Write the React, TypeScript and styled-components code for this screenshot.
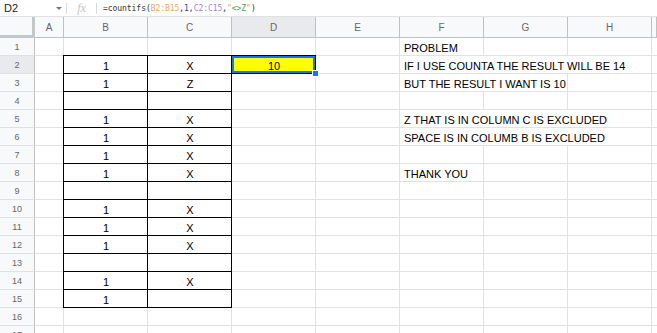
import React from "react";
import styled, { createGlobalStyle, css } from "styled-components";

const COLUMNS = ["A", "B", "C", "D", "E", "F", "G", "H", ""];
const GRID = "35px 29px repeat(7, 84px) 1fr";

type Cell = { col: string; text: string; span?: number };
type RowData = { n: number; boxed: boolean; cells: Cell[] };

const mk = (n: number, b: string, c: string, f?: string, span?: number): RowData => ({
  n,
  boxed: n >= 2 && n <= 15,
  cells: [
    { col: "B", text: b },
    { col: "C", text: c },
    ...(f ? [{ col: "F", text: f, span }] : []),
  ],
});

const rows: RowData[] = [
  mk(1, "", "", "PROBLEM"),
  mk(2, "1", "X", "IF I USE COUNTA THE RESULT WILL BE 14", 3),
  mk(3, "1", "Z", "BUT THE RESULT I WANT IS 10", 2),
  mk(4, "", ""),
  mk(5, "1", "X", "Z THAT IS IN COLUMN C IS EXCLUDED", 3),
  mk(6, "1", "X", "SPACE IS IN COLUMB B IS EXCLUDED", 3),
  mk(7, "1", "X"),
  mk(8, "1", "X", "THANK YOU"),
  mk(9, "", ""),
  mk(10, "1", "X"),
  mk(11, "1", "X"),
  mk(12, "1", "X"),
  mk(13, "", ""),
  mk(14, "1", "X"),
  mk(15, "1", ""),
  mk(16, "", ""),
  mk(17, "", ""),
];

const App = () => {
  return (
    <>
      <GlobalStyle />
      <Sheet>
        <FormulaBar>
          <NameBox>
            D2
            <Caret />
          </NameBox>
          <Divider />
          <Fx>fx</Fx>
          <Divider />
          <Formula>
            =countifs(<Tok $c="#f2a760">B2:B15</Tok>,<Tok $c="#3b3b8f">1</Tok>,
            <Tok $c="#ab82cf">C2:C15</Tok>,<Tok $c="#e6a24f">"</Tok>
            <Tok $c="#3aa55a">&lt;&gt;Z</Tok>
            <Tok $c="#e6a24f">"</Tok>)
          </Formula>
        </FormulaBar>

        <HeaderRow>
          <Corner />
          {COLUMNS.map((c, i) => (
            <ColHead key={i} $active={c === "D"}>
              {c}
            </ColHead>
          ))}
        </HeaderRow>

        {rows.map((row) => {
          const out: React.ReactNode[] = [];
          let skip = 0;
          COLUMNS.forEach((col, i) => {
            if (skip > 0) {
              skip--;
              return;
            }
            const cell = row.cells.find((c) => c.col === col);
            const boxed = row.boxed && (col === "B" || col === "C");
            const span = cell?.span ?? 1;
            skip = span - 1;
            if (row.n === 2 && col === "D") {
              out.push(
                <DataCell key={i} $boxed $fill="#ffff00" $center>
                  10
                  <Selection />
                  <Handle />
                </DataCell>
              );
              return;
            }
            out.push(
              <DataCell key={i} $boxed={boxed} $center={col === "B" || col === "C"} $span={span}>
                {cell?.text}
              </DataCell>
            );
          });
          return (
            <Row key={row.n}>
              <RowHead $active={row.n === 2}>{row.n}</RowHead>
              {out}
            </Row>
          );
        })}
      </Sheet>
    </>
  );
};

export default App;

const GlobalStyle = createGlobalStyle`
  html, body {
    margin: 0;
    padding: 0;
    background: #ffffff;
    overflow: hidden;
  }
  body {
    font-family: "Liberation Sans", Arial, sans-serif;
  }
`;

const Sheet = styled.div`
  width: 657px;
  height: 333px;
  overflow: hidden;
  background: #fff;
`;

const FormulaBar = styled.div`
  display: flex;
  align-items: center;
  height: 16px;
  border-bottom: 1px solid #e1e1e1;
  font-size: 11px;
  color: #222;
`;

const NameBox = styled.div`
  display: flex;
  align-items: center;
  justify-content: space-between;
  width: 58px;
  padding: 0 4px 0 4px;
  font-size: 11px;
  color: #202124;
`;

const Caret = styled.span`
  width: 0;
  height: 0;
  border-left: 3px solid transparent;
  border-right: 3px solid transparent;
  border-top: 3px solid #777;
  margin-top: 1px;
`;

const Divider = styled.div`
  width: 1px;
  height: 11px;
  background: #dadce0;
`;

const Fx = styled.div`
  width: 29px;
  text-align: center;
  font-family: "Liberation Serif", serif;
  font-style: italic;
  font-size: 12px;
  color: #c4c4c4;
`;

const Formula = styled.div`
  padding-left: 6px;
  font-family: "DejaVu Sans Mono", "Liberation Mono", monospace;
  font-size: 8px;
  letter-spacing: -0.05px;
  color: #333;
  white-space: nowrap;
`;

const Tok = styled.span<{ $c: string }>`
  color: ${(p) => p.$c};
`;

const HeaderRow = styled.div`
  display: grid;
  grid-template-columns: ${GRID};
  height: 21px;
  box-sizing: border-box;
`;

const Corner = styled.div`
  background: #f8f9fa;
  border-right: 3px solid #c4c7c9;
  border-bottom: 3px solid #c4c7c9;
  box-sizing: border-box;
`;

const ColHead = styled.div<{ $active?: boolean }>`
  display: flex;
  align-items: center;
  justify-content: center;
  box-sizing: border-box;
  background: ${(p) => (p.$active ? "#e8eaed" : "#f8f9fa")};
  border-right: 1px solid #c0c0c0;
  border-bottom: 1px solid #c0c0c0;
  font-family: "Liberation Sans", Arial, sans-serif;
  font-size: 10px;
  color: #666;
`;

const Row = styled.div`
  display: grid;
  grid-template-columns: ${GRID};
  height: 18px;
`;

const RowHead = styled.div<{ $active?: boolean }>`
  display: flex;
  align-items: center;
  justify-content: center;
  box-sizing: border-box;
  background: ${(p) => (p.$active ? "#e8eaed" : "#f8f9fa")};
  border-right: 1px solid #c0c0c0;
  border-bottom: 1px solid #e0e0e0;
  font-size: 9px;
  color: #666;
`;

const DataCell = styled.div<{ $boxed?: boolean; $center?: boolean; $fill?: string; $span?: number }>`
  position: relative;
  display: flex;
  align-items: flex-end;
  justify-content: ${(p) => (p.$center ? "center" : "flex-start")};
  box-sizing: border-box;
  padding: 0 3px 0 4px;
  grid-column: span ${(p) => p.$span ?? 1};
  background: ${(p) => p.$fill ?? "#fff"};
  border-right: 1px solid #e2e2e2;
  border-bottom: 1px solid #e2e2e2;
  font-size: 11px;
  line-height: 13px;
  color: #000;
  white-space: nowrap;
  ${(p) =>
    p.$boxed &&
    css`
      &::after {
        content: "";
        position: absolute;
        top: -1px;
        left: -1px;
        right: -1px;
        bottom: -1px;
        border: 1px solid #000;
        pointer-events: none;
        z-index: 1;
      }
    `}
`;

const Selection = styled.div`
  position: absolute;
  top: 0;
  left: 0;
  right: 0;
  bottom: 0;
  border: 2px solid #1a73e8;
  z-index: 2;
`;

const Handle = styled.div`
  position: absolute;
  right: -4px;
  bottom: -4px;
  width: 5px;
  height: 5px;
  background: #1a73e8;
  border: 1px solid #fff;
  z-index: 3;
`;
